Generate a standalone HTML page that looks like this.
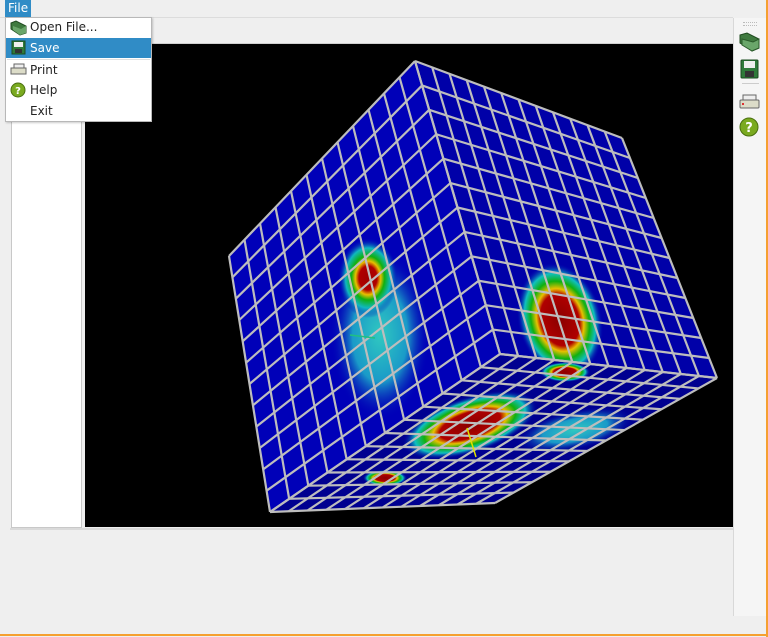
<!DOCTYPE html>
<html><head><meta charset="utf-8"><style>
*{margin:0;padding:0;box-sizing:border-box}
body{width:768px;height:637px;background:#efefef;position:relative;overflow:hidden;font-family:"DejaVu Sans","Liberation Sans",sans-serif;font-size:12px;color:#222}
.abs{position:absolute}
</style></head><body>
<div class="abs" style="right:0;top:0;width:2px;height:637px;background:#f5a030"></div>
<div class="abs" style="left:0;bottom:1px;width:768px;height:2px;background:#f5a030"></div>
<div class="abs" style="left:0;top:17px;width:733px;height:1px;background:#dcdcdc"></div>
<div class="abs" style="left:5px;top:0;width:26px;height:17px;background:#308cc6;color:#fff;padding:1px 0 0 3px">File</div>
<div class="abs" style="left:10px;top:43px;width:723px;height:1px;background:#d0d0d0"></div>
<div class="abs" style="left:11px;top:30px;width:71px;height:498px;background:#fff;border:1px solid #c8c8c8"></div>
<div class="abs" style="left:10px;top:528px;width:723px;height:2px;background:#dadada"></div>
<div class="abs" style="left:85px;top:44px;width:648px;height:483px;background:#000;overflow:hidden">
<svg id="cube" width="648" height="483" viewBox="85 44 648 483" xmlns="http://www.w3.org/2000/svg">
<defs>
<radialGradient id="hot"><stop offset="0" stop-color="#8b0000"/><stop offset="0.45" stop-color="#b00000"/><stop offset="0.55" stop-color="#e8c000"/><stop offset="0.68" stop-color="#10b010"/><stop offset="0.82" stop-color="#10c0c0"/><stop offset="1" stop-color="#0000b4" stop-opacity="0"/></radialGradient>
<radialGradient id="hot2"><stop offset="0" stop-color="#a00000"/><stop offset="0.3" stop-color="#b00000"/><stop offset="0.42" stop-color="#e8c000"/><stop offset="0.55" stop-color="#10b010"/><stop offset="0.75" stop-color="#10b8c0"/><stop offset="1" stop-color="#0000b4" stop-opacity="0"/></radialGradient>
<radialGradient id="cool"><stop offset="0" stop-color="#30c8c0"/><stop offset="0.55" stop-color="#1a9ac8"/><stop offset="1" stop-color="#0000b4" stop-opacity="0"/></radialGradient>
<clipPath id="c1"><polygon points="229,256 415,61 500,354 270,512"/></clipPath>
<clipPath id="c2"><polygon points="415,61 622,138 717,378 500,354"/></clipPath>
<clipPath id="c3"><polygon points="500,354 717,378 495,503 270,512"/></clipPath>
</defs>
<polygon points="229,256 415,61 500,354 270,512" fill="#0000b8"/>
<polygon points="415,61 622,138 717,378 500,354" fill="#0000a8"/>
<polygon points="500,354 717,378 495,503 270,512" fill="#000090"/>
<g clip-path="url(#c1)">
<ellipse cx="380" cy="335" rx="50" ry="85" fill="url(#cool)"/>
<ellipse cx="368" cy="278" rx="30" ry="40" fill="url(#hot2)"/>
</g>
<g clip-path="url(#c2)">
<ellipse cx="560" cy="320" rx="42" ry="58" fill="url(#hot)" transform="rotate(-15 560 320)"/>
</g>
<g clip-path="url(#c3)">
<ellipse cx="470" cy="425" rx="70" ry="28" fill="url(#hot)" transform="rotate(-18 470 425)"/>
<ellipse cx="575" cy="430" rx="60" ry="20" fill="url(#cool)" transform="rotate(-12 575 430)"/>
<ellipse cx="565" cy="372" rx="25" ry="10" fill="url(#hot)"/>
<ellipse cx="385" cy="478" rx="22" ry="8" fill="url(#hot)"/>
</g>
<g id="grid" stroke="#bdbdbd" stroke-width="2.2" fill="none"></g>
<line x1="467" y1="428" x2="476" y2="457" stroke="#e0e000" stroke-width="1.5"/>
<line x1="350" y1="335" x2="375" y2="338" stroke="#20c080" stroke-width="1.5"/>
</svg>
</div>
<div class="abs" style="left:733px;top:18px;width:33px;height:598px;background:#f5f5f5;border-left:1px solid #d8d8d8"></div>
<div class="abs" style="left:743px;top:22px;width:14px;height:4px;border-top:1px dotted #bbb;border-bottom:1px dotted #bbb"></div>
<div class="abs" style="left:742px;top:83px;width:17px;height:1px;background:#ccc"></div>
<svg class="abs" style="left:739px;top:30px" width="22" height="110" viewBox="0 0 22 110">
<path d="M1 5 L8 3 L20 9 L20 18 L13 21 L1 13 Z" fill="#3f7a3f" stroke="#1f4a1f"/>
<path d="M3 9 L14 12 L20 9 L20 18 L13 21 L3 15 Z" fill="#6aa66a" stroke="#2a5a2a"/>
<rect x="2" y="30" width="17" height="18" rx="1" fill="#2f7a3a" stroke="#1a4a20"/>
<rect x="5" y="31" width="11" height="7" fill="#eee"/>
<rect x="6" y="41" width="9" height="6" fill="#333"/>
<rect x="4" y="65" width="13" height="6" fill="#eee" stroke="#666"/>
<rect x="1" y="70" width="19" height="8" rx="1" fill="#dcdcc8" stroke="#666"/>
<rect x="3" y="73" width="2" height="2" fill="#d33"/>
<circle cx="10" cy="97" r="9" fill="#7aaa20" stroke="#4a7010"/>
<text x="10" y="102" font-size="13" font-weight="bold" fill="#fff" text-anchor="middle" font-family="DejaVu Sans">?</text>
</svg>
<div class="abs" style="left:5px;top:17px;width:147px;height:105px;background:#fff;border:1px solid #b8b8b8;box-shadow:1px 1px 2px rgba(0,0,0,.2)"></div>
<div class="abs" style="left:6px;top:38px;width:145px;height:20px;background:#308cc6"></div>
<div class="abs" style="left:7px;top:59px;width:143px;height:1px;background:#e0e0e0"></div>
<div class="abs" style="left:30px;top:20px">Open File...</div>
<div class="abs" style="left:30px;top:41px;color:#fff">Save</div>
<div class="abs" style="left:30px;top:63px">Print</div>
<div class="abs" style="left:30px;top:83px">Help</div>
<div class="abs" style="left:30px;top:104px">Exit</div>
<svg class="abs" style="left:10px;top:20px" width="18" height="100" viewBox="0 0 18 100">
<path d="M1 3 L6 1 L16 6 L16 13 L10 15 L1 9 Z" fill="#3f7a3f" stroke="#1f4a1f"/>
<path d="M3 6 L11 9 L16 6 L16 13 L10 15 L3 10 Z" fill="#6aa66a"/>
<rect x="2" y="21" width="13" height="13" fill="#2f7a3a" stroke="#1a4a20"/>
<rect x="4" y="22" width="9" height="5" fill="#eee"/>
<rect x="5" y="29" width="7" height="4" fill="#333"/>
<rect x="4" y="44" width="10" height="5" fill="#eee" stroke="#666"/>
<rect x="1" y="48" width="15" height="6" fill="#dcdcc8" stroke="#666"/>
<circle cx="8" cy="70" r="7" fill="#7aaa20" stroke="#4a7010"/>
<text x="8" y="74" font-size="10" font-weight="bold" fill="#fff" text-anchor="middle" font-family="DejaVu Sans">?</text>
</svg>
<script>
(function(){
var g=document.getElementById('grid'),N=12,s='';
function lerp(a,b,t){return [a[0]+(b[0]-a[0])*t,a[1]+(b[1]-a[1])*t];}
function face(p00,p10,p11,p01){
 for(var i=0;i<=N;i++){var t=i/N;
  var a=lerp(p00,p10,t),b=lerp(p01,p11,t);
  s+='<line x1="'+a[0]+'" y1="'+a[1]+'" x2="'+b[0]+'" y2="'+b[1]+'"/>';
  a=lerp(p00,p01,t);b=lerp(p10,p11,t);
  s+='<line x1="'+a[0]+'" y1="'+a[1]+'" x2="'+b[0]+'" y2="'+b[1]+'"/>';}
}
var L=[229,256],T=[415,61],C=[500,354],BL=[270,512],R1=[622,138],R2=[717,378],B=[495,503];
face(L,T,C,BL);face(T,R1,R2,C);face(BL,C,R2,B);
g.innerHTML=s;
})();
</script>
</body></html>
